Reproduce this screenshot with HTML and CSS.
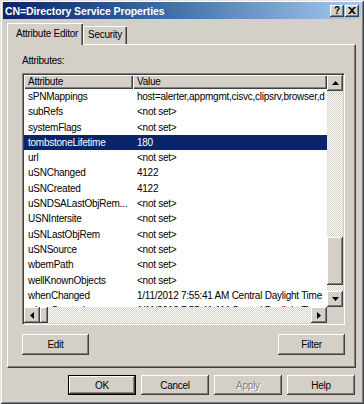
FILE: index.html
```html
<!DOCTYPE html>
<html>
<head>
<meta charset="utf-8">
<link rel="stylesheet" href="styles.css">
</head>
<body>
<div class="window">
  <div class="titlebar">
    <span class="title">CN=Directory Service Properties</span>
    <div class="tbtns">
      <span class="tbtn help">?</span>
      <span class="tbtn close"><svg width="8" height="7" viewBox="0 0 8 7"><path d="M0 0h2l2 2 2-2h2L5 3.5 8 7H6L4 5 2 7H0l3-3.5z" fill="#000"/></svg></span>
    </div>
  </div>
  <div class="body">
    <div class="tabs">
      <div class="tab active">Attribute Editor</div>
      <div class="tab">Security</div>
    </div>
    <div class="panel">
      <div class="label">Attributes:</div>
      <div class="list">
        <div class="list-main">
          <div class="header">
            <div class="hcol c1">Attribute</div>
            <div class="hcol c2">Value</div>
          </div>
          <div class="row"><span class="c1">sPNMappings</span><span class="c2">host=alerter,appmgmt,cisvc,clipsrv,browser,d</span></div>
          <div class="row"><span class="c1">subRefs</span><span class="c2">&lt;not set&gt;</span></div>
          <div class="row"><span class="c1">systemFlags</span><span class="c2">&lt;not set&gt;</span></div>
          <div class="row sel"><span class="c1">tombstoneLifetime</span><span class="c2">180</span></div>
          <div class="row"><span class="c1">url</span><span class="c2">&lt;not set&gt;</span></div>
          <div class="row"><span class="c1">uSNChanged</span><span class="c2">4122</span></div>
          <div class="row"><span class="c1">uSNCreated</span><span class="c2">4122</span></div>
          <div class="row"><span class="c1">uSNDSALastObjRem...</span><span class="c2">&lt;not set&gt;</span></div>
          <div class="row"><span class="c1">USNIntersite</span><span class="c2">&lt;not set&gt;</span></div>
          <div class="row"><span class="c1">uSNLastObjRem</span><span class="c2">&lt;not set&gt;</span></div>
          <div class="row"><span class="c1">uSNSource</span><span class="c2">&lt;not set&gt;</span></div>
          <div class="row"><span class="c1">wbemPath</span><span class="c2">&lt;not set&gt;</span></div>
          <div class="row"><span class="c1">wellKnownObjects</span><span class="c2">&lt;not set&gt;</span></div>
          <div class="row"><span class="c1">whenChanged</span><span class="c2">1/11/2012 7:55:41 AM Central Daylight Time</span></div>
          <div class="row"><span class="c1">whenCreated</span><span class="c2">1/11/2012 7:55:41 AM Central Daylight Time</span></div>
        </div>
        <div class="vbar">
          <div class="sbtn"><svg width="7" height="4" viewBox="0 0 7 4"><path d="M3.5 0L7 4H0z" fill="#000"/></svg></div>
          <div class="vtrack">
            <div class="vthumb"></div>
          </div>
          <div class="sbtn"><svg width="7" height="4" viewBox="0 0 7 4"><path d="M0 0h7L3.5 4z" fill="#000"/></svg></div>
        </div>
        <div class="hbar">
          <div class="sbtn"><svg width="4" height="7" viewBox="0 0 4 7"><path d="M0 3.5L4 0v7z" fill="#000"/></svg></div>
          <div class="hthumb"></div>
          <div class="htrack"></div>
          <div class="sbtn"><svg width="4" height="7" viewBox="0 0 4 7"><path d="M0 0l4 3.5L0 7z" fill="#000"/></svg></div>
        </div>
        <div class="corner"></div>
      </div>
      <div class="panel-buttons">
        <div class="btn">Edit</div>
        <div class="btn">Filter</div>
      </div>
    </div>
    <div class="dlg-buttons">
      <div class="btn default">OK</div>
      <div class="btn">Cancel</div>
      <div class="btn disabled">Apply</div>
      <div class="btn">Help</div>
    </div>
  </div>
</div>
</body>
</html>
```
FILE: styles.css
```css
html, body {
  margin: 0;
  padding: 0;
  background: #d4d0c8;
}
body {
  font-family: "Liberation Sans", Arial, sans-serif;
  font-size: 10px;
  letter-spacing: -0.25px;
  color: #000;
}
.window {
  width: 364px;
  height: 404px;
  box-sizing: border-box;
  padding: 2px 3px 0 3px;
  background: #d4d0c8;
  box-shadow: inset 1px 1px #e6e3de, inset -1px -1px #404040, inset 2px 2px #fff, inset -2px -2px #808080;
}
.titlebar {
  height: 17px;
  display: flex;
  align-items: center;
  justify-content: space-between;
  padding: 0 2px 0 2px;
  background: linear-gradient(to right, #0a246a 0%, #3a6ea5 45%, #a6caf0 100%);
}
.title {
  color: #fff;
  font-weight: bold;
  font-size: 10.5px;
  letter-spacing: -0.1px;
}
.tbtns {
  display: flex;
  gap: 1px;
}
.tbtn {
  width: 14px;
  height: 12px;
  box-sizing: border-box;
  background: #d4d0c8;
  display: flex;
  align-items: center;
  justify-content: center;
  font-weight: bold;
  font-size: 10px;
  box-shadow: inset -1px -1px #404040, inset 1px 1px #fff, inset -2px -2px #808080;
}
.body {
  padding: 0 5px 0 4px;
}
.tabs {
  margin-top: 4px;
  height: 21px;
  display: flex;
  align-items: flex-end;
  position: relative;
  z-index: 1;
}
.tab {
  box-sizing: border-box;
  height: 18px;
  padding: 3px 5px 0 5px;
  white-space: nowrap;
  background: #d4d0c8;
  box-shadow: inset 1px 1px #fff, inset -1px 0 #404040, inset -2px 0 #808080;
}
.tab.active {
  height: 22px;
  margin-bottom: -1px;
  padding: 5px 5px 0 9px;
  width: 76px;
}
.panel {
  box-sizing: border-box;
  height: 324px;
  padding: 10px 9px 0 14px;
  border-top: 1px solid #fff;
  border-left: 1px solid #fff;
  box-shadow: inset -1px -1px #808080;
  border-right: 1px solid #404040;
  border-bottom: 1px solid #404040;
}
.label {
  height: 12px;
  line-height: 12px;
}
.list {
  margin-top: 6px;
  width: 323px;
  height: 252px;
  box-sizing: border-box;
  border-top: 1px solid #808080;
  border-left: 1px solid #808080;
  border-right: 1px solid #fff;
  border-bottom: 1px solid #fff;
  box-shadow: inset 1px 1px #404040, inset -1px -1px #d4d0c8;
  padding: 1px;
  display: grid;
  grid-template-columns: 303px 16px;
  grid-template-rows: 232px 16px;
}
.list-main {
  background: #fff;
  overflow: hidden;
  white-space: nowrap;
}
.header {
  display: flex;
  height: 14px;
  background: #d4d0c8;
}
.hcol {
  box-sizing: border-box;
  height: 14px;
  line-height: 13px;
  padding-left: 4px;
  box-shadow: inset 1px 1px #fff, inset -1px -1px #404040, inset -2px -2px #808080;
}
.hcol.c1 { width: 109px; flex: none; }
.hcol.c2 { flex: 1; }
.row {
  display: flex;
  height: 15.3px;
  line-height: 15px;
}
.row .c1 {
  flex: none;
  width: 109px;
  padding-left: 4px;
  box-sizing: border-box;
  overflow: hidden;
}
.row .c2 {
  flex: none;
  padding-left: 4px;
}
.row.sel {
  background: #0a246a;
  color: #fff;
}
.vbar {
  display: flex;
  flex-direction: column;
  background: repeating-conic-gradient(#fff 0 25%, #d4d0c8 0 50%) 0 0 / 2px 2px;
}
.sbtn {
  flex: none;
  width: 16px;
  height: 16px;
  box-sizing: border-box;
  display: flex;
  align-items: center;
  justify-content: center;
  background: #d4d0c8;
  box-shadow: inset -1px -1px #404040, inset 1px 1px #fff, inset -2px -2px #808080;
}
.vtrack {
  flex: 1;
  padding-top: 146px;
}
.vthumb {
  height: 48px;
  background: #d4d0c8;
  box-shadow: inset -1px -1px #404040, inset 1px 1px #fff, inset -2px -2px #808080;
}
.hbar {
  display: flex;
  background: repeating-conic-gradient(#fff 0 25%, #d4d0c8 0 50%) 0 0 / 2px 2px;
}
.hthumb {
  width: 8px;
  height: 16px;
  background: #d4d0c8;
  box-shadow: inset -1px -1px #404040, inset 1px 1px #fff, inset -2px -2px #808080;
}
.htrack {
  flex: 1;
}
.corner {
  background: #d4d0c8;
}
.panel-buttons {
  margin-top: 9px;
  display: flex;
  justify-content: space-between;
  width: 323px;
}
.panel-buttons .btn {
  width: 67px;
  height: 21px;
}
.btn {
  box-sizing: border-box;
  width: 68px;
  height: 20px;
  display: flex;
  align-items: center;
  justify-content: center;
  background: #d4d0c8;
  box-shadow: inset -1px -1px #404040, inset 1px 1px #fff, inset -2px -2px #808080;
}
.btn.default {
  box-shadow: inset 0 0 0 1px #000, inset -2px -2px #404040, inset 2px 2px #fff, inset -3px -3px #808080;
}
.btn.disabled {
  color: #808080;
  text-shadow: 1px 1px #fff;
}
.dlg-buttons {
  margin-top: 7px;
  display: flex;
  justify-content: flex-end;
  gap: 5px;
  padding-right: 1px;
}
```
